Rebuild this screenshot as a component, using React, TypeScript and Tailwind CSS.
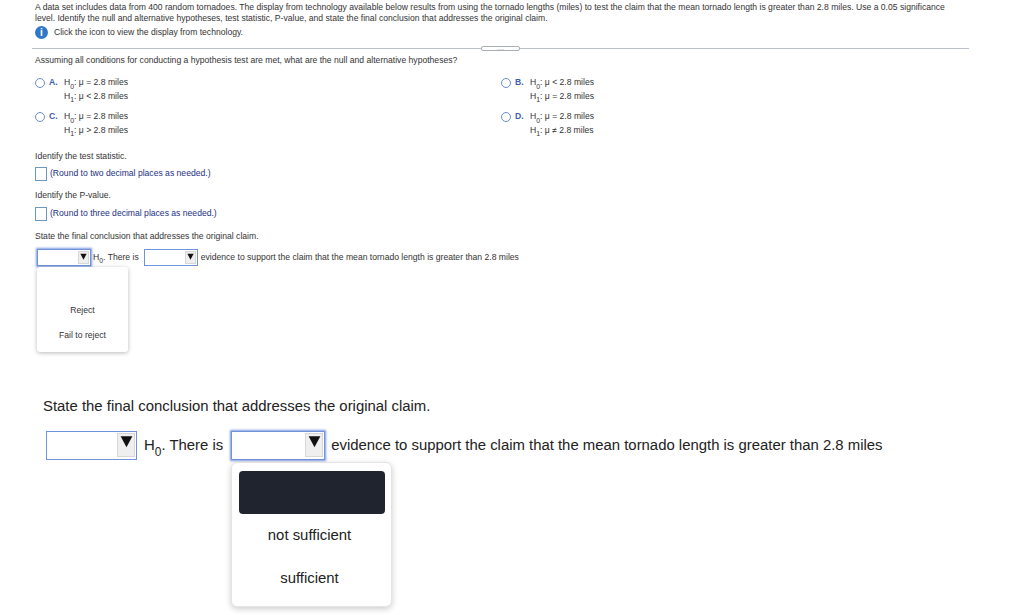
const font = { fontFamily: '"Liberation Sans", Arial, sans-serif' };

const Sub = ({ n }: { n: string }) => <sub className="text-[0.8em] leading-none align-[-0.3em]">{n}</sub>;

const Option = ({ letter, h0, h1 }: { letter: string; h0: string; h1: string }) => (
    <div className="flex items-start w-[466px]">
        <div className="w-[10px] h-[10px] mt-[2px] rounded-full border border-[#6b8cc4] bg-white" />
        <span className="w-[14px] ml-[4px] text-[#3b5db0] font-bold text-[8.6px] leading-[13px]">{letter}.</span>
        <div className="text-[8.6px] leading-[13.5px] text-[#333] pl-[1px]">
            <div>H<Sub n="0" />: μ {h0} 2.8 miles</div>
            <div>H<Sub n="1" />: μ {h1} 2.8 miles</div>
        </div>
    </div>
);

const AnswerBox = ({ note, top }: { note: string; top: string }) => (
    <div className={`flex items-center h-[15px] ${top}`}>
        <div className="w-[12px] h-[14px] border border-[#6f97b8] bg-white" />
        <span className="ml-[3px] text-[8.6px] text-[#23307f]">{note}</span>
    </div>
);

const Select = ({ w, h, btn, icon, focus }: { w: string; h: string; btn: string; icon: string; focus?: boolean }) => (
    <div className={`${w} ${h} flex justify-end items-start pt-px pr-px bg-white border border-[#6f93dc] ${focus ? 'shadow-[0_0_2px_1px_#7d9be0]' : ''}`}>
        <div className={`${btn} flex items-start justify-center bg-[#efefef] border border-[#d8d8d8]`}>
            <svg viewBox="0 0 10 10" className={icon}><path d="M0.5 1h9L5 9.5z" fill="#111" /></svg>
        </div>
    </div>
);

const App = () => {
    return (
        <div className="w-[1024px] h-[615px] overflow-hidden bg-white text-[#333] relative" style={font}>
            <div className="pl-[35px] pt-[2px]">
                <p className="w-[915px] text-[8.6px] leading-[11px] text-[#333]">
                    A data set includes data from 400 random tornadoes. The display from technology available below results from using the tornado lengths (miles) to test the claim that the mean tornado length is greater than 2.8 miles. Use a 0.05 significance level. Identify the null and alternative hypotheses, test statistic, P-value, and state the final conclusion that addresses the original claim.
                </p>
                <div className="flex items-center mt-[1px] h-[14px]">
                    <div className="w-[13px] h-[13px] rounded-full bg-[#2f78c8] text-white text-[10px] font-bold leading-[13px] text-center">i</div>
                    <span className="ml-[6px] text-[8.6px]">Click the icon to view the display from technology.</span>
                </div>
            </div>

            <div className="relative ml-[32px] w-[937px] h-px bg-[#b9c1cb] mt-[9px]">
                <div className="absolute left-[449px] top-[-2px] w-[39px] h-[5px] bg-white border border-[#a9aeb5] rounded-[2px] text-[5px] leading-[2px] text-center text-[#777]">.....</div>
            </div>

            <div className="pl-[35px]">
                <p className="text-[8.6px] leading-[11px] mt-[6px]">Assuming all conditions for conducting a hypothesis test are met, what are the null and alternative hypotheses?</p>

                <div className="grid grid-cols-[466px_466px] gap-y-[7px] mt-[10px]">
                    <Option letter="A" h0="=" h1="<" />
                    <Option letter="B" h0="<" h1="=" />
                    <Option letter="C" h0="=" h1=">" />
                    <Option letter="D" h0="=" h1="≠" />
                </div>

                <p className="text-[8.6px] leading-[11px] mt-[14px]">Identify the test statistic.</p>
                <AnswerBox top="mt-[4px]" note="(Round to two decimal places as needed.)" />
                <p className="text-[8.6px] leading-[11px] mt-[9px]">Identify the P-value.</p>
                <AnswerBox top="mt-[5px]" note="(Round to three decimal places as needed.)" />
                <p className="text-[8.6px] leading-[11px] mt-[10px]">State the final conclusion that addresses the original claim.</p>

                <div className="relative flex items-center mt-[6px] text-[8.6px] h-[18px]">
                    <div className="ml-[2px]">
                        <Select w="w-[54px]" h="h-[17px]" btn="w-[11px] h-[13px]" icon="w-[7px] h-[7px] mt-[1px]" focus />
                    </div>
                    <span className="ml-[2px]">H<Sub n="0" />. There is</span>
                    <div className="ml-[5px]">
                        <Select w="w-[54px]" h="h-[17px]" btn="w-[11px] h-[13px]" icon="w-[7px] h-[7px] mt-[1px]" />
                    </div>
                    <span className="ml-[3px]">evidence to support the claim that the mean tornado length is greater than 2.8 miles</span>
                    <div className="absolute left-[2px] top-[19px] w-[91px] h-[85px] flex flex-col items-center rounded-[3px] bg-white shadow-[0_1px_4px_rgba(0,0,0,0.28)] text-[8.6px]">
                        <div className="h-[25px]" />
                        <div className="h-[25px] leading-[25px] mt-[6px]">Reject</div>
                        <div className="h-[25px] leading-[25px]">Fail to reject</div>
                    </div>
                </div>
            </div>

            <div className="pl-[43px] text-[#222]">
                <p className="text-[14.9px] leading-[18px] mt-[131px]">State the final conclusion that addresses the original claim.</p>
                <div className="relative flex items-center mt-[15px] h-[30px] text-[14.9px]">
                    <div className="ml-[3px]">
                        <Select w="w-[91px]" h="h-[29px]" btn="w-[18px] h-[24px]" icon="w-[13px] h-[13px] mt-[1px]" />
                    </div>
                    <span className="ml-[7px]">H<Sub n="0" />. There is</span>
                    <div className="ml-[8px]">
                        <Select w="w-[94px]" h="h-[29px]" btn="w-[18px] h-[24px]" icon="w-[13px] h-[13px] mt-[1px]" focus />
                    </div>
                    <span className="ml-[6px]">evidence to support the claim that the mean tornado length is greater than 2.8 miles</span>
                    <div className="absolute left-[188px] top-[32px] w-[161px] h-[145px] px-[7px] pt-[8px] flex flex-col items-center rounded-[6px] bg-white border border-[#e4e4e4] shadow-[0_2px_6px_rgba(0,0,0,0.2)]">
                        <div className="w-[146px] h-[43px] shrink-0 rounded-[4px] bg-[#1f242e]" />
                        <div className="h-[43px] leading-[43px] shrink-0 pr-[4px]">not sufficient</div>
                        <div className="h-[43px] leading-[43px] shrink-0 pr-[4px]">sufficient</div>
                    </div>
                </div>
            </div>
        </div>
    );
};

export default App;
